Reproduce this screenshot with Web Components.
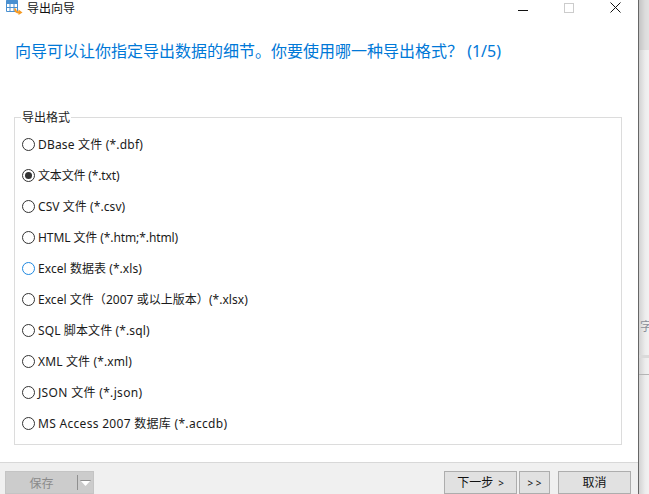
<!DOCTYPE html>
<html lang="zh">
<head>
<meta charset="utf-8">
<title>导出向导</title>
<style>
html, body { margin: 0; padding: 0; width: 649px; height: 494px; overflow: hidden; background: #fff; }
body { font-family: "Noto Sans", "Noto Sans CJK SC", sans-serif; font-size: 12px; color: #1a1a1a; }
</style>
</head>
<body>
<export-wizard></export-wizard>

<script>
class WizTitlebar extends HTMLElement {
    constructor() {
        super();
        this.attachShadow({ mode: 'open' });
        this.shadowRoot.innerHTML = `
            <style>
                :host { display: flex; align-items: center; height: 15px; padding-left: 6px; background: #fff; }
                .icon { width: 17px; height: 15px; flex: none; margin-right: 4px; }
                .title { flex: 1; font-size: 12px; line-height: 15px; color: #111; padding-top: 1px; }
                .btns { display: flex; }
                .btn { width: 46px; height: 15px; display: flex; align-items: center; justify-content: center; }
                svg { display: block; }
            </style>
            <svg class="icon" viewBox="0 0 17 15">
                <path d="M0.500 0h11v3h-11z" fill="#4a90d0"/>
                <path d="M0.500 0.500h11v11h-11zM0.500 3.500h11M0.500 7.500h11M4 0.500v11M8 0.500v11" fill="none" stroke="#4a90d0" stroke-width="1"/>
                <path d="M9 8.500c0 2.500 1.500 4 4.500 4" fill="none" stroke="#f59a23" stroke-width="2"/>
                <path d="M12.500 9.500l4 3-4 2.500z" fill="#f59a23"/>
            </svg>
            <span class="title"><slot></slot></span>
            <div class="btns">
                <div class="btn"><svg width="10" height="10"><path d="M0 7.500h10" stroke="#111" stroke-width="1"/></svg></div>
                <div class="btn"><svg width="10" height="10"><rect x=".5" y=".5" width="9" height="9" fill="none" stroke="#ccc"/></svg></div>
                <div class="btn"><svg width="11" height="11"><path d="M.5 .5l10 10M10.500 .5l-10 10" stroke="#111" stroke-width="1"/></svg></div>
            </div>
        `;
    }
}

class WizGroup extends HTMLElement {
    constructor() {
        super();
        this.attachShadow({ mode: 'open' });
        this.shadowRoot.innerHTML = `
            <style>
                :host { display: block; position: relative; margin: 0 16px 0 14px; height: 328px; box-sizing: border-box; border: 1px solid #dcdcdc; background: #fff; }
                .legend { position: absolute; left: 6px; top: -8px; padding: 0 1px; background: #fff; line-height: 16px; font-size: 12px; color: #222; }
                .rows { display: flex; flex-direction: column; padding-top: 11px; padding-left: 7px; }
            </style>
            <div class="legend"></div>
            <div class="rows"><slot></slot></div>
        `;
    }
    connectedCallback() {
        this.shadowRoot.querySelector('.legend').textContent = this.getAttribute('label');
    }
}

class WizRadio extends HTMLElement {
    constructor() {
        super();
        this.attachShadow({ mode: 'open' });
        this.shadowRoot.innerHTML = `
            <style>
                :host { display: flex; align-items: center; height: 31px; font-size: 12px; color: #1a1a1a; }
                .dot { width: 13px; height: 13px; box-sizing: border-box; border: 1px solid #333; border-radius: 50%; flex: none; margin-right: 3px; display: flex; align-items: center; justify-content: center; background: #fff; }
                :host([checked]) .dot::after { content: ""; width: 7px; height: 7px; border-radius: 50%; background: #333; }
                :host([focused]) .dot { border-color: #1e88e0; }
                .text { line-height: 16px; white-space: nowrap; }
            </style>
            <span class="dot"></span><span class="text"><slot></slot></span>
        `;
    }
}

class WizButton extends HTMLElement {
    constructor() {
        super();
        this.attachShadow({ mode: 'open' });
        this.shadowRoot.innerHTML = `
            <style>
                :host { display: flex; align-items: center; justify-content: center; box-sizing: border-box; height: 23px; border: 1px solid #adadad; background: #e1e1e1; font-size: 12px; line-height: 16px; color: #111; }
                .label { display: block; }
            </style>
            <span class="label"><slot></slot></span>
        `;
    }
}

class WizSaveButton extends HTMLElement {
    constructor() {
        super();
        this.attachShadow({ mode: 'open' });
        this.shadowRoot.innerHTML = `
            <style>
                :host { display: flex; box-sizing: border-box; width: 89px; height: 23px; background: #cccccc; border: 1px solid #c4c4c4; font-size: 12px; color: #8a8a8a; }
                .label { width: 71px; display: flex; align-items: center; justify-content: center; border-right: 1px solid #8f8f8f; margin: 3px 0; }
                .arrow { flex: 1; display: flex; align-items: center; justify-content: center; }
                svg { display: block; }
            </style>
            <div class="label"><slot></slot></div>
            <div class="arrow"><svg width="11" height="6"><path d="M0 0h11l-5.500 6z" fill="#fff"/><path d="M0 0h11l-.5 1h-10z" fill="#8f8f8f"/></svg></div>
        `;
    }
}

class WizFooter extends HTMLElement {
    constructor() {
        super();
        this.attachShadow({ mode: 'open' });
        this.shadowRoot.innerHTML = `
            <style>
                :host { display: flex; height: 32px; box-sizing: border-box; border-top: 1px solid #d8d8d8; background: #f0f0f0; padding: 8px 7px 0 5px; align-items: flex-start; }
                .left { flex: 1; }
                .right { display: flex; }
            </style>
            <div class="left"><slot name="left"></slot></div>
            <div class="right"><slot></slot></div>
        `;
    }
}

class ExportWizard extends HTMLElement {
    constructor() {
        super();
        this.attachShadow({ mode: 'open' });
        this.shadowRoot.innerHTML = `
            <style>
                :host { display: flex; width: 649px; height: 494px; overflow: hidden; }
                .window { width: 638px; flex: none; height: 494px; display: flex; flex-direction: column; background: #fff; }
                .heading { font-size: 16px; line-height: 22px; color: #0078d7; padding: 25px 0 0 15px; height: 77px; box-sizing: border-box; white-space: nowrap; }
                .body { flex: 1; padding-top: 25px; }
                .frame { width: 1px; flex: none; background: #666; }
                .behind { flex: 1; display: flex; flex-direction: column; position: relative; background: linear-gradient(90deg, #d2d2d2, #ececec 60%, #f2f2f2); }
                .behind .top { height: 50px; background: linear-gradient(90deg, #c4c4c4, #dcdcdc 60%, #e2e2e2); }
                .behind .band { height: 3px; margin-top: 305px; background: #dadada; }
                .behind .line { height: 1px; margin-top: 16px; background: #b4b4b4; }
                .behind span { position: absolute; left: 1px; top: 319px; font-size: 12px; line-height: 16px; color: #8a8f99; }
                small { font-size: 10px; }
                small.next { margin-left: 5px; }
            </style>
            <div class="window">
                <wiz-titlebar>导出向导</wiz-titlebar>
                <div class="heading">向导可以让你指定导出数据的细节。你要使用哪一种导出格式？ (1/5)</div>
                <div class="body">
                    <wiz-group label="导出格式">
                        <wiz-radio style="letter-spacing:.19px">DBase 文件 (*.dbf)</wiz-radio>
                        <wiz-radio style="letter-spacing:-.15px" checked>文本文件 (*.txt)</wiz-radio>
                        <wiz-radio style="letter-spacing:.07px">CSV 文件 (*.csv)</wiz-radio>
                        <wiz-radio style="letter-spacing:-.09px">HTML 文件 (*.htm;*.html)</wiz-radio>
                        <wiz-radio style="letter-spacing:.06px" focused>Excel 数据表 (*.xls)</wiz-radio>
                        <wiz-radio style="letter-spacing:.04px">Excel 文件（2007 或以上版本）(*.xlsx)</wiz-radio>
                        <wiz-radio style="letter-spacing:.12px">SQL 脚本文件 (*.sql)</wiz-radio>
                        <wiz-radio style="letter-spacing:.14px">XML 文件 (*.xml)</wiz-radio>
                        <wiz-radio style="letter-spacing:.33px">JSON 文件 (*.json)</wiz-radio>
                        <wiz-radio style="letter-spacing:.3px">MS Access 2007 数据库 (*.accdb)</wiz-radio>
                    </wiz-group>
                </div>
                <wiz-footer>
                    <wiz-save-button slot="left">保存</wiz-save-button>
                    <wiz-button style="width:73px;margin-right:2px">下一步<small class="next">&gt;</small></wiz-button>
                    <wiz-button style="width:31px;margin-right:8px"><small>&gt; &gt;</small></wiz-button>
                    <wiz-button style="width:73px">取消</wiz-button>
                </wiz-footer>
            </div>
            <div class="frame"></div>
            <div class="behind"><div class="top"></div><div class="band"></div><div class="line"></div><span>字</span></div>
        `;
    }
}

customElements.define('wiz-titlebar', WizTitlebar);
customElements.define('wiz-group', WizGroup);
customElements.define('wiz-radio', WizRadio);
customElements.define('wiz-button', WizButton);
customElements.define('wiz-save-button', WizSaveButton);
customElements.define('wiz-footer', WizFooter);
customElements.define('export-wizard', ExportWizard);
</script>
</body>
</html>
